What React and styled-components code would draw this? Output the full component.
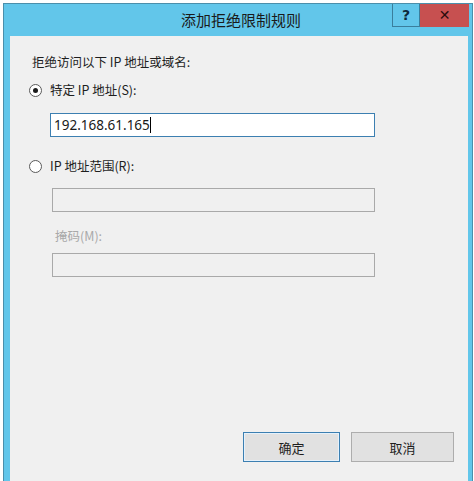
import styled, { createGlobalStyle } from "styled-components";

const Global = createGlobalStyle`
  html, body {
    margin: 0;
    background: #fff;
  }
  body {
    font-family: "Noto Sans CJK SC", "Noto Sans", sans-serif;
  }
`;

const Window = styled.div`
  box-sizing: border-box;
  margin: 3px 0 0 3px;
  width: 470px;
  height: 478px;
  border: 1px solid #4b8fab;
  border-bottom: none;
  background: #62c6ea;
  display: flex;
  flex-direction: column;
`;

const TitleBar = styled.div`
  height: 32px;
  display: grid;
  grid-template-columns: 1fr auto 1fr;
  align-items: start;
`;

const Title = styled.div`
  grid-column: 2;
  font-size: 15px;
  line-height: 32px;
  color: #1a1a1a;
  padding-left: 6px;
`;

const Controls = styled.div`
  justify-self: end;
  display: flex;
  margin-right: 3px;
`;

const CtrlButton = styled.div`
  box-sizing: border-box;
  width: ${(p) => p.$w}px;
  height: 23px;
  display: flex;
  align-items: center;
  justify-content: center;
  background: ${(p) => (p.$close ? "#c75050" : "#62c6ea")};
  border: 1px solid ${(p) => (p.$close ? "#c75050" : "#3a7e9c")};
  border-top: none;
  font-family: "DejaVu Sans", sans-serif;
  font-weight: bold;
  font-size: 14px;
  color: ${(p) => (p.$close ? "#2a0c0c" : "#0d2a3a")};
`;

const Panel = styled.div`
  flex: 1;
  margin: 0 4px 0 6px;
  background: #f0f0f0;
  padding: 17px 0 0 22px;
  font-size: 12.5px;
  color: #1e1e1e;
  display: flex;
  flex-direction: column;
`;

const Label = styled.div`
  line-height: 18px;
  color: ${(p) => (p.$disabled ? "#a9a9a9" : "#1e1e1e")};
  margin: ${(p) => p.$m || "0"};
`;

const RadioRow = styled.label`
  display: flex;
  align-items: center;
  gap: 8px;
  margin: ${(p) => p.$m || "0"};
  line-height: 18px;
`;

const Radio = styled.span`
  box-sizing: border-box;
  width: 13px;
  height: 13px;
  border-radius: 50%;
  border: 1px solid #5a5a5a;
  background: #fff;
  display: flex;
  align-items: center;
  justify-content: center;
  &::after {
    content: "";
    width: 5px;
    height: 5px;
    border-radius: 50%;
    background: ${(p) => (p.$on ? "#1a1a1a" : "transparent")};
  }
`;

const Input = styled.div`
  box-sizing: border-box;
  width: ${(p) => p.$w || 325}px;
  height: 24px;
  margin: ${(p) => p.$m || "0"};
  border: 1px solid ${(p) => (p.$active ? "#3c7fb1" : "#a9a9a9")};
  background: ${(p) => (p.$active ? "#fff" : "#f0f0f0")};
  font-family: "Noto Sans", sans-serif;
  font-size: 13.5px;
  line-height: 22px;
  padding-left: 3px;
  color: #1a1a1a;
`;

const Caret = styled.span`
  display: inline-block;
  width: 1px;
  height: 16px;
  background: #000;
  vertical-align: -3px;
`;

const Footer = styled.div`
  margin-top: auto;
  display: flex;
  justify-content: flex-end;
  gap: 11px;
  padding: 0 14px 19px 0;
`;

const Button = styled.div`
  box-sizing: border-box;
  width: ${(p) => p.$w}px;
  height: 30px;
  display: flex;
  align-items: center;
  justify-content: center;
  background: #e1e1e1;
  border: 1px solid ${(p) => (p.$def ? "#3c7fb1" : "#adadad")};
  box-shadow: ${(p) => (p.$def ? "inset 0 0 0 1px #e5f1fb" : "none")};
  font-size: 13px;
  color: #1e1e1e;
`;

export default function App() {
  return (
    <>
      <Global />
      <Window>
        <TitleBar>
          <Title>添加拒绝限制规则</Title>
          <Controls>
            <CtrlButton $w={28}>?</CtrlButton>
            <CtrlButton $w={49} $close>✕</CtrlButton>
          </Controls>
        </TitleBar>
        <Panel>
          <Label>拒绝访问以下 IP 地址或域名:</Label>
          <RadioRow $m="10px 0 0 -3px">
            <Radio $on />
            特定 IP 地址(S):
          </RadioRow>
          <Input $active $m="14px 0 0 18px">
            192.168.61.165
            <Caret />
          </Input>
          <RadioRow $m="20px 0 0 -3px">
            <Radio />
            IP 地址范围(R):
          </RadioRow>
          <Input $w={323} $m="13px 0 0 20px" />
          <Label $disabled $m="15px 0 0 23px">
            掩码(M):
          </Label>
          <Input $w={323} $m="8px 0 0 20px" />
          <Footer>
            <Button $w={97} $def>
              确定
            </Button>
            <Button $w={103}>取消</Button>
          </Footer>
        </Panel>
      </Window>
    </>
  );
}
